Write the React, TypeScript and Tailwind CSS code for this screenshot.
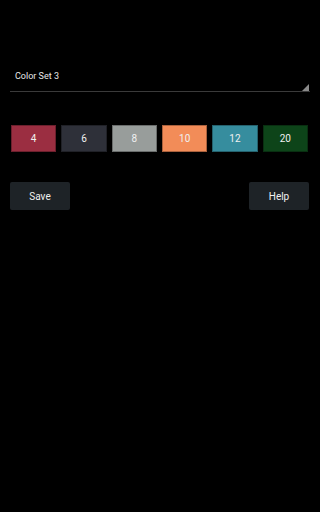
import React from "react";

const swatches = [
  { n: "4", c: "bg-[#9b2e41]" },
  { n: "6", c: "bg-[#2e3039]" },
  { n: "8", c: "bg-[#989d9b]" },
  { n: "10", c: "bg-[#f28c58]" },
  { n: "12", c: "bg-[#368d9e]" },
  { n: "20", c: "bg-[#0d4419]" },
];

export default function App() {
  return (
    <div className="w-[320px] h-[512px] bg-black text-white flex flex-col" style={{ fontFamily: "Roboto, sans-serif" }}>
      <div className="mt-[66px] mx-[10px] relative h-[26px] border-b border-[#3a3a3a] flex items-center">
        <span className="pl-[5px] text-[9px] leading-none -mt-[5px] text-[#e8e8e8]">Color Set 3</span>
        <svg className="absolute right-[1px] bottom-[0px]" width="7" height="7" viewBox="0 0 7 7">
          <polygon points="7,0 7,7 0,7" fill="#8a8a8a" />
        </svg>
      </div>
      <div className="mt-[33px] ml-[11px] mr-[12px] flex gap-[5px]">
        {swatches.map((s) => (
          <div
            key={s.n}
            className={`flex-1 h-[27px] ${s.c} border border-black/30 flex items-center justify-center text-[10px] text-[#f0f0f0]`}
          >
            {s.n}
          </div>
        ))}
      </div>
      <div className="mt-[30px] mx-[10px] flex justify-between">
        <button className="w-[60px] h-[28px] bg-[#1e2327] rounded-[2px] text-[10px] text-[#f0f0f0]">Save</button>
        <button className="w-[60px] h-[28px] bg-[#1e2327] rounded-[2px] text-[10px] text-[#f0f0f0] mr-[1px]">Help</button>
      </div>
    </div>
  );
}
